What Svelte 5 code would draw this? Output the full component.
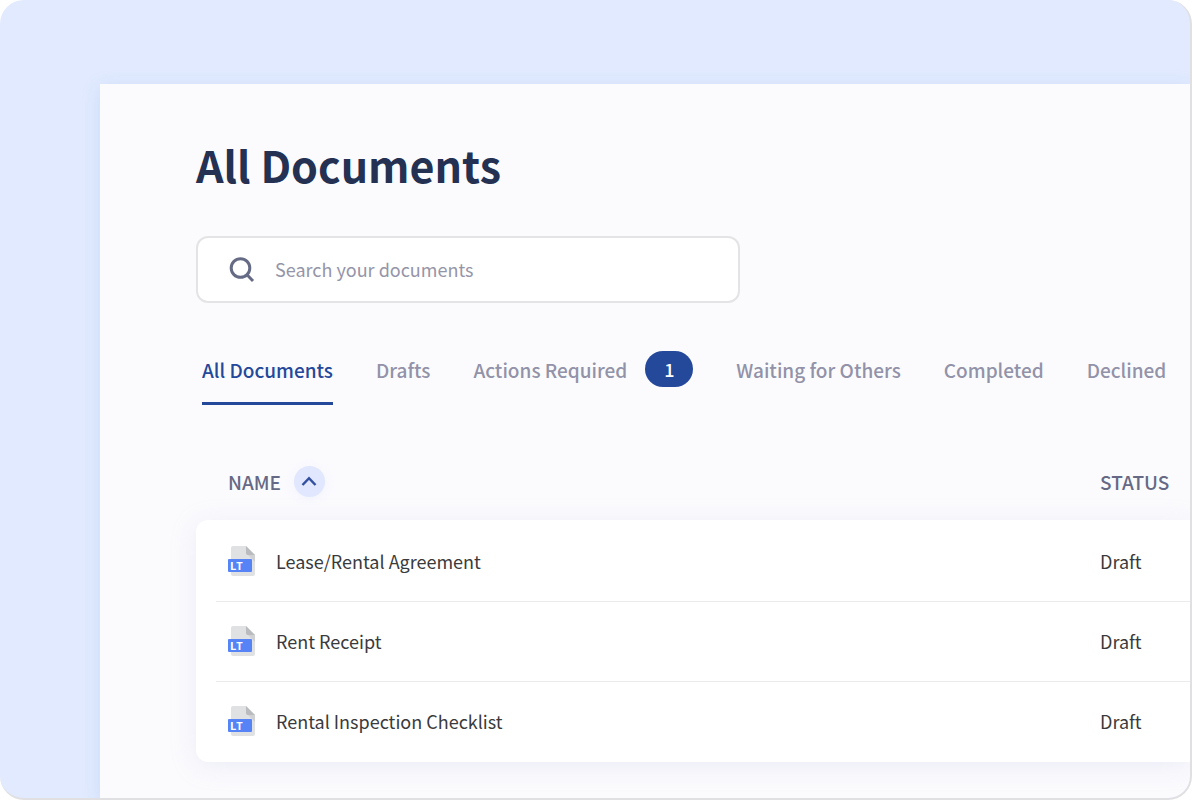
<script lang="ts">
	type Tab = { label: string; count?: number };

	const tabs: Tab[] = [
		{ label: 'All Documents' },
		{ label: 'Drafts' },
		{ label: 'Actions Required', count: 1 },
		{ label: 'Waiting for Others' },
		{ label: 'Completed' },
		{ label: 'Declined' }
	];

	const documents = [
		{ name: 'Lease/Rental Agreement', status: 'Draft' },
		{ name: 'Rent Receipt', status: 'Draft' },
		{ name: 'Rental Inspection Checklist', status: 'Draft' }
	];

	let activeTab = 'All Documents';
	let search = '';
	let ascending = true;

	$: visible = documents.filter((doc) => doc.name.toLowerCase().includes(search.toLowerCase()));
	$: sorted = [...visible].sort((a, b) =>
		ascending ? a.name.localeCompare(b.name) : b.name.localeCompare(a.name)
	);
</script>

<div class="frame">
	<main class="panel">
		<h1>All Documents</h1>

		<label class="search">
			<svg class="search-icon" viewBox="0 0 26 26" aria-hidden="true">
				<circle cx="11.5" cy="11" r="9.3" />
				<path d="M18 17.8L24 24" />
			</svg>
			<input
				type="text"
				placeholder="Search your documents"
				aria-label="Search your documents"
				bind:value={search}
			/>
		</label>

		<nav class="tabs">
			{#each tabs as tab (tab.label)}
				<button
					class="tab"
					class:active={tab.label === activeTab}
					on:click={() => (activeTab = tab.label)}
				>
					{tab.label}
					{#if tab.count}
						<span class="badge">{tab.count}</span>
					{/if}
				</button>
			{/each}
		</nav>

		<table>
			<thead>
				<tr>
					<th class="name">
						Name
						<button
							class="sort"
							class:descending={!ascending}
							aria-label="Sort by name"
							on:click={() => (ascending = !ascending)}
						>
							<svg viewBox="0 0 16 10" aria-hidden="true">
								<path d="M1.5 9L8 2.2L14.5 9" />
							</svg>
						</button>
					</th>
					<th>Status</th>
				</tr>
			</thead>
			<tbody>
				{#each sorted as doc (doc.name)}
					<tr>
						<td class="name">
							<svg class="file" viewBox="0 0 28 30" aria-hidden="true">
								<path d="M5 0H18L27 9V28Q27 30 25 30H5Q3 30 3 28V2Q3 0 5 0Z" fill="#dfe1e3" />
								<path d="M18 7L27 16V9Z" fill="#cfd1d4" />
								<path d="M18 0L27 9H20Q18 9 18 7Z" fill="#b9bbbe" />
								<rect y="13" width="24" height="13" rx="1" fill="#5683f6" />
								<text x="2" y="24">LT</text>
							</svg>
							{doc.name}
						</td>
						<td>{doc.status}</td>
					</tr>
				{/each}
			</tbody>
		</table>
	</main>
</div>

<style>
	:global(body) {
		background: #fff;
	}

	.frame {
		box-sizing: border-box;
		min-height: 100vh;
		padding: 84px 0 0 100px;
		display: flex;
		overflow: hidden;
		background: #e1eafe;
		border-right: 2px solid #e0e0e2;
		border-bottom: 2px solid #e0e0e2;
		border-radius: 24px;
		font-family: 'Noto Sans CJK SC', 'Open Sans', sans-serif;
		font-size: 18px;
		color: #3a3a3c;
	}

	.panel {
		flex: 1;
		min-width: 0;
		box-sizing: border-box;
		padding: 48px 0 36px 96px;
		background: #fbfbfe;
		box-shadow: 0 4px 16px rgba(150, 190, 240, 0.3);
	}

	h1 {
		margin: 0;
		font-size: 43px;
		line-height: 64px;
		font-weight: 700;
		color: #243152;
	}

	button {
		font: inherit;
		border: none;
		padding: 0;
		background: none;
		cursor: pointer;
	}

	.search {
		box-sizing: border-box;
		display: flex;
		align-items: center;
		gap: 20px;
		width: 544px;
		max-width: 100%;
		height: 67px;
		margin-top: 40px;
		padding: 0 31px;
		background: #fff;
		border: 2px solid #e4e4e6;
		border-radius: 12px;
	}

	.search-icon {
		width: 26px;
		height: 26px;
		fill: none;
		stroke: #666b85;
		stroke-width: 3;
	}

	.search input {
		flex: 1;
		min-width: 0;
		padding: 0 0 2px;
		border: none;
		outline: none;
		background: none;
		font: inherit;
		color: #3a3a3c;
	}

	.search input::placeholder {
		color: #9595a8;
	}

	.tabs {
		display: flex;
		gap: 43px;
		margin-top: 48px;
		padding-left: 6px;
	}

	.tab {
		display: flex;
		align-items: center;
		gap: 18px;
		height: 54px;
		padding-bottom: 15px;
		box-sizing: border-box;
		border-bottom: 3px solid transparent;
		font-size: 19px;
		font-weight: 500;
		color: #9292a8;
		white-space: nowrap;
	}

	.tab.active {
		color: #24489a;
		border-color: #24489a;
	}

	.badge {
		width: 48px;
		line-height: 36px;
		border-radius: 18px;
		background: #24489a;
		color: #fff;
		font-size: 18px;
		text-align: center;
	}

	table {
		display: block;
		margin-top: 53px;
	}

	thead,
	tbody {
		display: block;
	}

	tr {
		position: relative;
		display: grid;
		grid-template-columns: 1fr 90px;
		align-items: center;
		height: 80px;
		padding-left: 32px;
	}

	thead tr {
		height: 46px;
		padding-bottom: 16px;
		color: #666985;
	}

	th {
		padding: 0;
		font-size: 19px;
		font-weight: 500;
		text-align: left;
		text-transform: uppercase;
	}

	td {
		padding: 0;
	}

	.name {
		display: flex;
		align-items: center;
	}

	th.name {
		gap: 13px;
	}

	td.name {
		gap: 20px;
	}

	.sort {
		display: flex;
		align-items: center;
		justify-content: center;
		width: 31px;
		height: 31px;
		border-radius: 50%;
		background: #e0e7ff;
		box-shadow: 0 2px 12px rgba(200, 205, 240, 0.2);
	}

	.sort.descending svg {
		transform: rotate(180deg);
	}

	.sort svg {
		width: 16px;
		height: 10px;
		fill: none;
		stroke: #3350a0;
		stroke-width: 2.5;
	}

	tbody {
		padding: 1px 0;
		background: #fff;
		border-radius: 12px 0 0 12px;
		box-shadow: 0 4px 24px rgba(190, 190, 225, 0.25);
	}

	tbody tr + tr::before {
		content: '';
		position: absolute;
		top: 0;
		left: 20px;
		right: 0;
		border-top: 1px solid #ebebed;
	}

	.file {
		width: 28px;
		height: 30px;
	}

	.file text {
		font-family: 'Open Sans', sans-serif;
		font-size: 11px;
		font-weight: 700;
		fill: #fff;
	}
</style>
